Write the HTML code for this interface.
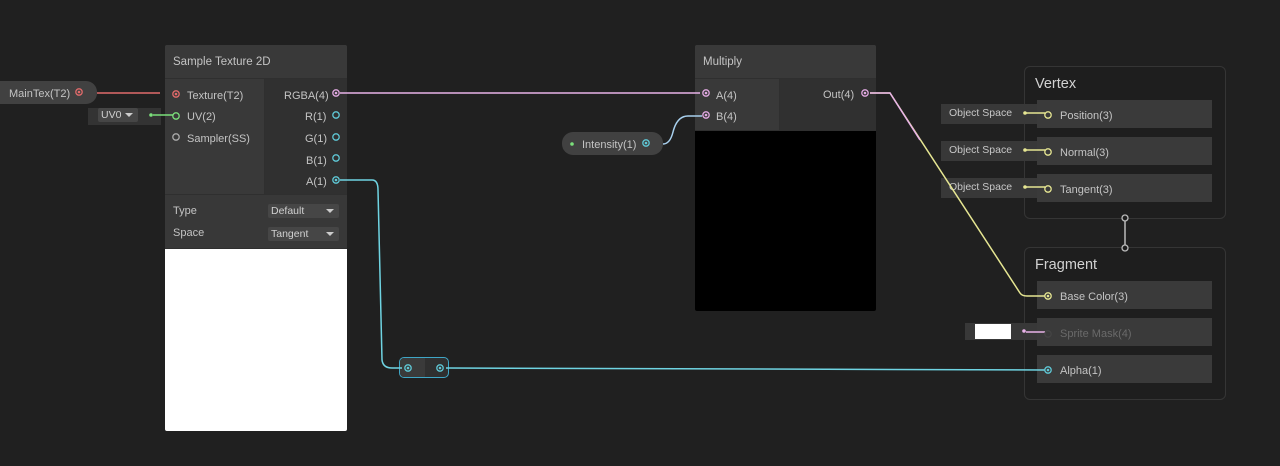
<!DOCTYPE html><html><head><style>
body{margin:0;width:1280px;height:466px;background:#202020;overflow:hidden;position:relative;font-family:"Liberation Sans",sans-serif;font-size:11px;color:#c4c4c4}
.a{position:absolute;box-sizing:border-box}
.t{position:absolute;white-space:nowrap}
.row{position:absolute;background:#3a3a3a;left:1037px;width:175px;height:28px}
.os{position:absolute;background:#383838;left:941px;width:96px;height:20px;font-size:10.5px;color:#c8c8c8;padding:3px 0 0 8px;box-sizing:border-box}
.dd{position:absolute;background:#464646;border-radius:2px;height:14px;font-size:10.5px;padding:1px 0 0 3px;box-sizing:border-box;color:#d0d0d0}
.dd:after{content:"";position:absolute;right:5px;top:5px;border:4px solid transparent;border-top:4px solid #ccc;border-bottom:0}
</style></head><body>
<!-- Sample Texture node -->
<div class="a" style="left:165px;top:45px;width:182px;height:386px;background:#2f2f2f;border-radius:2px;overflow:hidden">
 <div class="a" style="left:0;top:0;width:182px;height:33px;background:#393939"></div>
 <div class="a" style="left:0;top:34px;width:99px;height:115px;background:#393939"></div>
 <div class="a" style="left:100px;top:34px;width:82px;height:115px;background:#303030"></div>
 <div class="a" style="left:0;top:150px;width:182px;height:53px;background:#383838"></div>
 <div class="a" style="left:0;top:204px;width:182px;height:182px;background:#fff"></div>
</div>
<div class="t" style="left:173px;top:56px;font-size:11.5px">Sample Texture 2D</div>
<div class="t" style="left:187px;top:90px">Texture(T2)</div>
<div class="t" style="left:187px;top:111px">UV(2)</div>
<div class="t" style="left:187px;top:133px">Sampler(SS)</div>
<div class="t" style="left:284px;top:90px">RGBA(4)</div>
<div class="t" style="left:305px;top:111px">R(1)</div>
<div class="t" style="left:305px;top:133px">G(1)</div>
<div class="t" style="left:306px;top:155px">B(1)</div>
<div class="t" style="left:306px;top:176px">A(1)</div>
<div class="t" style="left:173px;top:205px">Type</div>
<div class="t" style="left:173px;top:227px">Space</div>
<div class="dd" style="left:268px;top:204px;width:71px">Default</div>
<div class="dd" style="left:268px;top:227px;width:71px">Tangent</div>
<!-- MainTex property -->
<div class="a" style="left:-20px;top:81px;width:117px;height:23px;background:#414141;border-radius:11px"></div>
<div class="t" style="left:9px;top:88px">MainTex(T2)</div>
<div class="a" style="left:88px;top:108px;width:73px;height:17px;background:#333"></div>
<div class="dd" style="left:98px;top:108px;width:40px;height:14px">UV0</div>
<!-- Multiply -->
<div class="a" style="left:695px;top:45px;width:181px;height:266px;background:#2f2f2f;border-radius:2px;overflow:hidden">
 <div class="a" style="left:0;top:0;width:181px;height:33px;background:#393939"></div>
 <div class="a" style="left:0;top:34px;width:84px;height:51px;background:#393939"></div>
 <div class="a" style="left:85px;top:34px;width:96px;height:51px;background:#303030"></div>
 <div class="a" style="left:0;top:86px;width:181px;height:180px;background:#000"></div>
</div>
<div class="t" style="left:703px;top:56px;font-size:11.5px">Multiply</div>
<div class="t" style="left:716px;top:90px">A(4)</div>
<div class="t" style="left:716px;top:111px">B(4)</div>
<div class="t" style="left:823px;top:89px">Out(4)</div>
<div class="a" style="left:562px;top:132px;width:101px;height:23px;background:#414141;border-radius:11px"></div>
<div class="t" style="left:582px;top:139px">Intensity(1)</div>
<!-- redirect -->
<div class="a" style="left:399px;top:357px;width:50px;height:21px;background:#2f2f2f;border:1.5px solid #3fa6c6;border-radius:5px;overflow:hidden"><div class="a" style="left:0;top:0;width:25px;height:20px;background:#3a3a3a"></div></div>
<!-- master stack -->
<div class="a" style="left:1024px;top:66px;width:202px;height:153px;border:1px solid #353535;border-radius:6px;background:#1e1e1e"></div>
<div class="a" style="left:1024px;top:247px;width:202px;height:153px;border:1px solid #353535;border-radius:6px;background:#1e1e1e"></div>
<div class="t" style="left:1035px;top:76px;font-size:14.5px;color:#d2d2d2">Vertex</div>
<div class="t" style="left:1035px;top:257px;font-size:14.5px;color:#d2d2d2">Fragment</div>
<div class="row" style="top:100px"></div><div class="row" style="top:137px"></div><div class="row" style="top:174px"></div>
<div class="row" style="top:281px"></div><div class="row" style="top:318px"></div><div class="row" style="top:355px"></div>
<div class="t" style="left:1060px;top:110px">Position(3)</div>
<div class="t" style="left:1060px;top:147px">Normal(3)</div>
<div class="t" style="left:1060px;top:184px">Tangent(3)</div>
<div class="t" style="left:1060px;top:291px">Base Color(3)</div>
<div class="t" style="left:1060px;top:328px;color:#6a6a6a">Sprite Mask(4)</div>
<div class="t" style="left:1060px;top:365px">Alpha(1)</div>
<div class="os" style="top:104px">Object Space</div>
<div class="os" style="top:141px">Object Space</div>
<div class="os" style="top:178px">Object Space</div>
<div class="a" style="left:965px;top:323px;width:72px;height:17px;background:#383838"></div>
<div class="a" style="left:975px;top:324px;width:36px;height:15px;background:#fff"></div>
<svg class="a" style="left:0;top:0" width="1280" height="466" fill="none">
 <g stroke-width="1.5">
 <path d="M97 93 H160" stroke="#e06a6a"/>
 <path d="M153 115 H173" stroke="#7be07b"/>
 <path d="M340 93 H700" stroke="#e8b2e8"/>
 <path d="M340 180 H372 Q378 180 378 190 L382 360 Q383 368 392 368 H402 M446 368 L1045 370" stroke="#6fd4e2"/>
 <path d="M663 144 Q670 144 673 132 Q677 116 688 116 H702" stroke="#a8d0ee"/>
 <path d="M870 93 H890 L1020 293 Q1022 296 1027 296 H1045" stroke="#e6e692"/>
 <path d="M870 93 H890 L920 140" stroke="#e8b2e8"/>
 <path d="M1026 113 H1045 M1026 150 H1045 M1026 187 H1045" stroke="#e6e692"/>
 <path d="M1026 332 H1045" stroke="#e8b2e8"/>
 <path d="M1125 219 V247" stroke="#bbb"/>
 </g>
 <g stroke-width="1.3">
 <circle cx="79" cy="92" r="3.2" stroke="#e06a6a"/><circle cx="79" cy="92" r="1.3" fill="#e06a6a"/>
 <circle cx="176" cy="94" r="3.2" stroke="#e06a6a"/><circle cx="176" cy="94" r="1.3" fill="#e06a6a"/>
 <circle cx="176" cy="116" r="3.2" stroke="#7be07b"/>
 <circle cx="176" cy="137" r="3.2" stroke="#aaa"/>
 <circle cx="336" cy="93" r="3.2" stroke="#e0a8e0"/><circle cx="336" cy="93" r="1.3" fill="#e0a8e0"/>
 <circle cx="336" cy="115" r="3.2" stroke="#5fc8d6"/>
 <circle cx="336" cy="137" r="3.2" stroke="#5fc8d6"/>
 <circle cx="336" cy="158" r="3.2" stroke="#5fc8d6"/>
 <circle cx="336" cy="180" r="3.2" stroke="#5fc8d6"/><circle cx="336" cy="180" r="1.3" fill="#5fc8d6"/>
 <circle cx="706" cy="93" r="3.2" stroke="#e0a8e0"/><circle cx="706" cy="93" r="1.3" fill="#e0a8e0"/>
 <circle cx="706" cy="115" r="3.2" stroke="#e0a8e0"/><circle cx="706" cy="115" r="1.3" fill="#e0a8e0"/>
 <circle cx="865" cy="93" r="3.2" stroke="#e0a8e0"/><circle cx="865" cy="93" r="1.3" fill="#e0a8e0"/>
 <circle cx="646" cy="143" r="3.2" stroke="#5fc8d6"/><circle cx="646" cy="143" r="1.3" fill="#5fc8d6"/>
 <circle cx="408" cy="368" r="3.2" stroke="#5fc8d6"/><circle cx="408" cy="368" r="1.3" fill="#5fc8d6"/>
 <circle cx="440" cy="368" r="3.2" stroke="#5fc8d6"/><circle cx="440" cy="368" r="1.3" fill="#5fc8d6"/>
 <circle cx="1048" cy="115" r="3.2" stroke="#e6e692"/>
 <circle cx="1048" cy="152" r="3.2" stroke="#e6e692"/>
 <circle cx="1048" cy="189" r="3.2" stroke="#e6e692"/>
 <circle cx="1048" cy="296" r="3.2" stroke="#e6e692"/><circle cx="1048" cy="296" r="1.3" fill="#e6e692"/>
 <circle cx="1048" cy="334" r="3.2" stroke="#444"/>
 <circle cx="1048" cy="370" r="3.2" stroke="#5fc8d6"/><circle cx="1048" cy="370" r="1.3" fill="#5fc8d6"/>
 <circle cx="1125" cy="218" r="3" stroke="#bbb" fill="#1e1e1e"/>
 <circle cx="1125" cy="248" r="3" stroke="#bbb" fill="#1e1e1e"/>
 </g>
 <circle cx="151" cy="115" r="1.8" fill="#7be07b"/>
 <circle cx="572" cy="144" r="1.8" fill="#7be07b"/>
 <circle cx="1025" cy="113" r="1.8" fill="#e6e692"/>
 <circle cx="1025" cy="150" r="1.8" fill="#e6e692"/>
 <circle cx="1025" cy="187" r="1.8" fill="#e6e692"/>
 <circle cx="1024" cy="331" r="1.8" fill="#e8b2e8"/>
</svg>
</body></html>
